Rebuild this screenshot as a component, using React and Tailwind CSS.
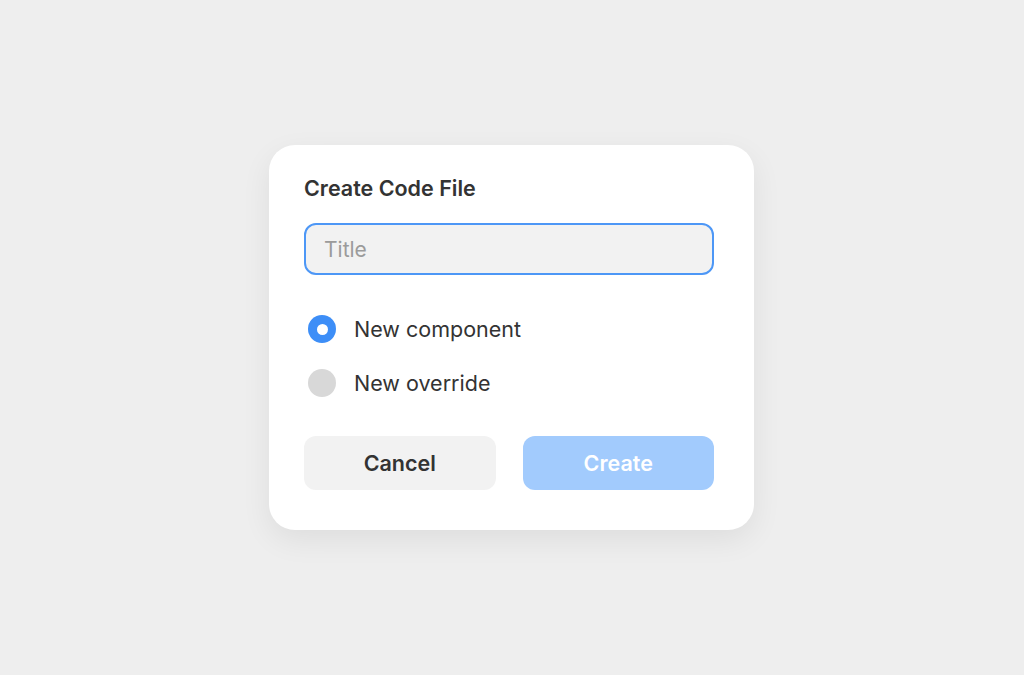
import { useState } from 'react'

const FONT = { fontFamily: 'Inter, "Noto Sans", sans-serif' }

// ── Radio option ──────────────────────────────────────────────
function Radio({ checked, label, onClick }) {
  return (
    <button onClick={onClick} className="flex items-center gap-[18px] h-7 text-left">
      {checked ? (
        <span className="w-7 h-7 rounded-full bg-[#3d8ef7] flex items-center justify-center">
          <span className="w-[11px] h-[11px] rounded-full bg-white" />
        </span>
      ) : (
        <span className="w-7 h-7 rounded-full bg-[#d8d8d8]" />
      )}
      <span className="text-[21.5px] text-[#333]">{label}</span>
    </button>
  )
}

export default function App() {
  const [choice, setChoice] = useState('component')
  const [title, setTitle] = useState('')

  return (
    <div style={FONT} className="min-h-[675px] bg-[#eeeeee] flex items-start justify-center pt-[145px]">
      <div className="w-[485px] ml-[-1px] bg-white rounded-[26px] shadow-[0_10px_30px_rgba(0,0,0,0.07)] pl-[35px] pr-[40px] pt-[29px] pb-[40px]">
        <h2 className="text-[21.5px] leading-7 font-semibold text-[#333]">Create Code File</h2>

        <input
          value={title}
          onChange={(e) => setTitle(e.target.value)}
          placeholder="Title"
          className="mt-[21px] w-full h-[52px] rounded-[12px] border-2 border-[#4d97f6] bg-[#f2f2f2] px-[18px] text-[21px] text-[#333] placeholder:text-[#9b9b9b] outline-none"
        />

        <div className="mt-[40px] flex flex-col gap-[26px] pl-[4px]">
          <Radio checked={choice === 'component'} label="New component" onClick={() => setChoice('component')} />
          <Radio checked={choice === 'override'} label="New override" onClick={() => setChoice('override')} />
        </div>

        <div className="mt-[39px] grid grid-cols-2 gap-[27px]">
          <button className="h-[54px] rounded-[12px] bg-[#f2f2f2] text-[21.5px] font-semibold text-[#333]">Cancel</button>
          <button className="h-[54px] rounded-[12px] bg-[#a2cbfd] text-[21.5px] font-semibold text-white">Create</button>
        </div>
      </div>
    </div>
  )
}
